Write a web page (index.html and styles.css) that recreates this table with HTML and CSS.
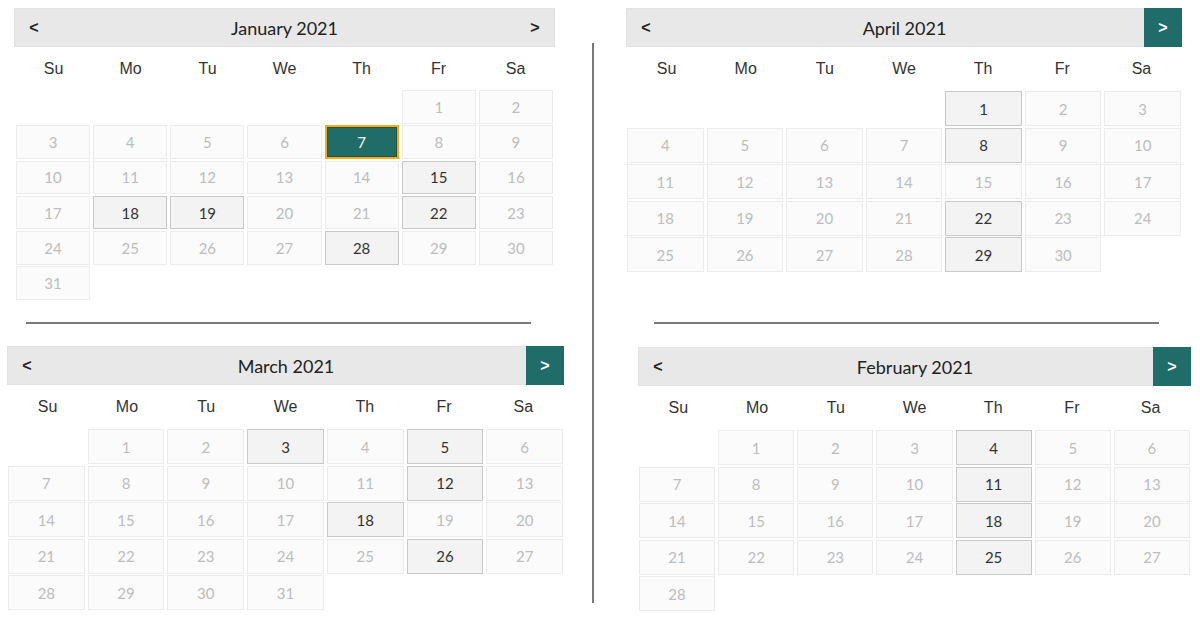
FILE: index.html
```html
<!DOCTYPE html>
<html>
<head>
<meta charset="utf-8">
<link rel="stylesheet" href="styles.css">
</head>
<body>
<div class="page">
  <div class="col col-left">
    <div class="top">
      <div class="cal cal-jan">
        <div class="head"><span class="nav prev">&lt;</span><span class="title">January 2021</span><span class="nav next">&gt;</span></div>
        <div class="wk"><span>Su</span><span>Mo</span><span>Tu</span><span>We</span><span>Th</span><span>Fr</span><span>Sa</span></div>
        <div class="grid">
          <span class="e"></span><span class="e"></span><span class="e"></span><span class="e"></span><span class="e"></span><span class="d">1</span><span class="d">2</span>
          <span class="d">3</span><span class="d">4</span><span class="d">5</span><span class="d">6</span><span class="sel">7</span><span class="d">8</span><span class="d">9</span>
          <span class="d">10</span><span class="d">11</span><span class="d">12</span><span class="d">13</span><span class="d">14</span><span class="a">15</span><span class="d">16</span>
          <span class="d">17</span><span class="a">18</span><span class="a">19</span><span class="d">20</span><span class="d">21</span><span class="a">22</span><span class="d">23</span>
          <span class="d">24</span><span class="d">25</span><span class="d">26</span><span class="d">27</span><span class="a">28</span><span class="d">29</span><span class="d">30</span>
          <span class="d">31</span>
        </div>
      </div>
    </div>
    <div class="rule rule-left"></div>
    <div class="cal cal-mar">
      <div class="head"><span class="nav prev">&lt;</span><span class="title">March 2021</span><span class="nav next btn">&gt;</span></div>
      <div class="wk"><span>Su</span><span>Mo</span><span>Tu</span><span>We</span><span>Th</span><span>Fr</span><span>Sa</span></div>
      <div class="grid">
        <span class="e"></span><span class="d">1</span><span class="d">2</span><span class="a">3</span><span class="d">4</span><span class="a">5</span><span class="d">6</span>
        <span class="d">7</span><span class="d">8</span><span class="d">9</span><span class="d">10</span><span class="d">11</span><span class="a">12</span><span class="d">13</span>
        <span class="d">14</span><span class="d">15</span><span class="d">16</span><span class="d">17</span><span class="a">18</span><span class="d">19</span><span class="d">20</span>
        <span class="d">21</span><span class="d">22</span><span class="d">23</span><span class="d">24</span><span class="d">25</span><span class="a">26</span><span class="d">27</span>
        <span class="d">28</span><span class="d">29</span><span class="d">30</span><span class="d">31</span>
      </div>
    </div>
  </div>
  <div class="vline"></div>
  <div class="col col-right">
    <div class="top">
      <div class="cal cal-apr">
        <div class="head"><span class="nav prev">&lt;</span><span class="title">April 2021</span><span class="nav next btn">&gt;</span></div>
        <div class="wk"><span>Su</span><span>Mo</span><span>Tu</span><span>We</span><span>Th</span><span>Fr</span><span>Sa</span></div>
        <div class="grid">
          <span class="e"></span><span class="e"></span><span class="e"></span><span class="e"></span><span class="a">1</span><span class="d">2</span><span class="d">3</span>
          <span class="d">4</span><span class="d">5</span><span class="d">6</span><span class="d">7</span><span class="a">8</span><span class="d">9</span><span class="d">10</span>
          <span class="d">11</span><span class="d">12</span><span class="d">13</span><span class="d">14</span><span class="d">15</span><span class="d">16</span><span class="d">17</span>
          <span class="d">18</span><span class="d">19</span><span class="d">20</span><span class="d">21</span><span class="a">22</span><span class="d">23</span><span class="d">24</span>
          <span class="d">25</span><span class="d">26</span><span class="d">27</span><span class="d">28</span><span class="a">29</span><span class="d">30</span>
        </div>
      </div>
    </div>
    <div class="rule rule-right"></div>
    <div class="cal cal-feb">
      <div class="head"><span class="nav prev">&lt;</span><span class="title">February 2021</span><span class="nav next btn">&gt;</span></div>
      <div class="wk"><span>Su</span><span>Mo</span><span>Tu</span><span>We</span><span>Th</span><span>Fr</span><span>Sa</span></div>
      <div class="grid">
        <span class="e"></span><span class="d">1</span><span class="d">2</span><span class="d">3</span><span class="a">4</span><span class="d">5</span><span class="d">6</span>
        <span class="d">7</span><span class="d">8</span><span class="d">9</span><span class="d">10</span><span class="a">11</span><span class="d">12</span><span class="d">13</span>
        <span class="d">14</span><span class="d">15</span><span class="d">16</span><span class="d">17</span><span class="a">18</span><span class="d">19</span><span class="d">20</span>
        <span class="d">21</span><span class="d">22</span><span class="d">23</span><span class="d">24</span><span class="a">25</span><span class="d">26</span><span class="d">27</span>
        <span class="d">28</span>
      </div>
    </div>
  </div>
</div>
</body>
</html>
```

FILE: styles.css
```css
* { box-sizing: border-box; }
html, body { margin: 0; padding: 0; background: #fff; }
body {
  font-family: "Liberation Sans", Arial, sans-serif;
  color: #222;
  width: 1200px;
  height: 625px;
  overflow: hidden;
}
.page {
  display: grid;
  grid-template-columns: 592px 2px 606px;
  height: 625px;
}
.col { display: flex; flex-direction: column; }
.top { height: 322px; padding-top: 8px; }
.vline {
  margin-top: 43px;
  height: 560px;
  background: #7a7a7a;
}
.rule {
  height: 2px;
  width: 505px;
  background: #7a7a7a;
}
.rule-left { margin-left: 26px; margin-bottom: 22px; }
.rule-right { margin-left: 60px; margin-bottom: 23px; }

.cal { display: flex; flex-direction: column; }
.cal-jan { margin-left: 14px; width: 541px; }
.cal-apr { margin-left: 32px; width: 556px; }
.cal-mar { margin-left: 7px; width: 557px; }
.cal-feb { margin-left: 44px; width: 553px; }

.head {
  height: 39px;
  background: #e8e8e8;
  border: 1px solid #e2e2e2;
  display: flex;
  align-items: stretch;
}
.nav {
  width: 38px;
  display: flex;
  align-items: center;
  justify-content: center;
  font-family: "Liberation Sans", Arial, sans-serif;
  font-weight: bold;
  font-size: 16px;
  color: #222;
}
.title {
  flex: 1;
  display: flex;
  align-items: center;
  justify-content: center;
  font-family: Lato, "Liberation Sans", sans-serif;
  font-size: 18px;
  color: #222;
}
.btn {
  background: #1f6c69;
  color: #fff;
  margin: -1px -1px -1px 0;
}

.wk {
  display: grid;
  grid-template-columns: repeat(7, 1fr);
  height: 44px;
  align-items: center;
  font-size: 16px;
  color: #333;
  text-align: center;
  padding: 0 1px;
}
.cal-jan .wk { height: 43px; }

.grid {
  display: grid;
  grid-template-columns: repeat(7, 1fr);
  grid-auto-rows: 35px;
  column-gap: 3px;
  row-gap: 1.5px;
  padding: 0 1px;
}
.cal-jan .grid { grid-auto-rows: 33.5px; row-gap: 1.8px; padding: 0 2px; }
.grid span {
  display: flex;
  align-items: center;
  justify-content: center;
  font-family: Lato, "Liberation Sans", sans-serif;
  font-size: 15px;
}
.grid .d {
  background: #fbfbfb;
  border: 1px solid #ececec;
  color: #bdbdbd;
}
.grid .a {
  background: #f3f3f3;
  border: 1px solid #c9c9c9;
  color: #333;
}
.grid .sel {
  background: #1f6c69;
  border: 2px solid #f4ae0f;
  box-shadow: inset 0 0 0 1px #2b4f4d;
  color: #fff;
}
```
